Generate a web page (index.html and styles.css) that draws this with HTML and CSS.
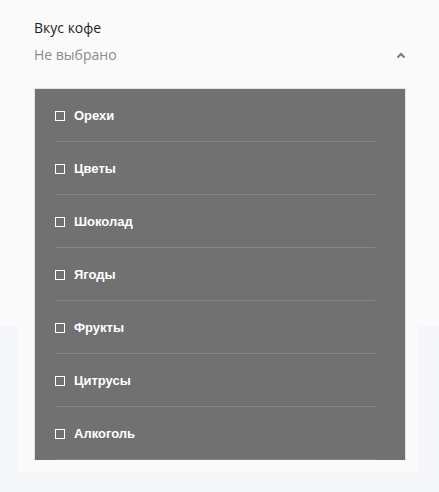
FILE: index.html
```html
<!DOCTYPE html>
<html lang="ru">
<head>
<meta charset="utf-8">
<link rel="stylesheet" href="styles.css">
</head>
<body>
<div class="card">
  <div class="field-label">Вкус кофе</div>
  <div class="field-value">
    <span>Не выбрано</span>
    <svg class="chevron" width="10" height="7" viewBox="0 0 10 7"><path d="M1.5 5.5 L5 2 L8.5 5.5" fill="none" stroke="#7a7a7a" stroke-width="2"/></svg>
  </div>
  <ul class="options">
    <li class="option"><span class="box"></span><span class="opt-text">Орехи</span></li>
    <li class="option"><span class="box"></span><span class="opt-text">Цветы</span></li>
    <li class="option"><span class="box"></span><span class="opt-text">Шоколад</span></li>
    <li class="option"><span class="box"></span><span class="opt-text">Ягоды</span></li>
    <li class="option"><span class="box"></span><span class="opt-text">Фрукты</span></li>
    <li class="option"><span class="box"></span><span class="opt-text">Цитрусы</span></li>
    <li class="option"><span class="box"></span><span class="opt-text">Алкоголь</span></li>
  </ul>
</div>
</body>
</html>
```
FILE: styles.css
```css
html, body {
  margin: 0;
  padding: 0;
}
body {
  width: 439px;
  height: 492px;
  background: linear-gradient(#fafafa 0, #fafafa 326px, #f5f6f9 326px);
  font-family: "Open Sans", "Noto Sans", sans-serif;
  overflow: hidden;
}
.card {
  margin-left: 17px;
  width: 402px;
  height: 473px;
  box-sizing: border-box;
  background: #fafafa;
  padding: 19px 13px 0 17px;
}
.field-label {
  font-size: 14px;
  line-height: 18px;
  color: #1f1f1f;
}
.field-value {
  margin-top: 9px;
  display: flex;
  align-items: center;
  justify-content: space-between;
  font-size: 14px;
  line-height: 18px;
  color: #8c8c8c;
}
.chevron {
  display: block;
  margin-right: 0;
  margin-top: 1px;
}
.options {
  list-style: none;
  margin: 24px 0 0 0;
  padding: 0;
  background: #717171;
  border: 1px solid #e3e3e3;
  border-bottom: none;
}
.option {
  display: flex;
  align-items: center;
  height: 52px;
  margin: 0 30px 0 20px;
  border-bottom: 1px solid #878787;
}
.box {
  width: 8px;
  height: 8px;
  border: 1.5px solid #ffffff;
  margin-right: 9px;
  margin-top: 1px;
}
.opt-text {
  font-family: "Liberation Sans", Arial, sans-serif;
  font-weight: bold;
  font-size: 13px;
  color: #ffffff;
}
```
